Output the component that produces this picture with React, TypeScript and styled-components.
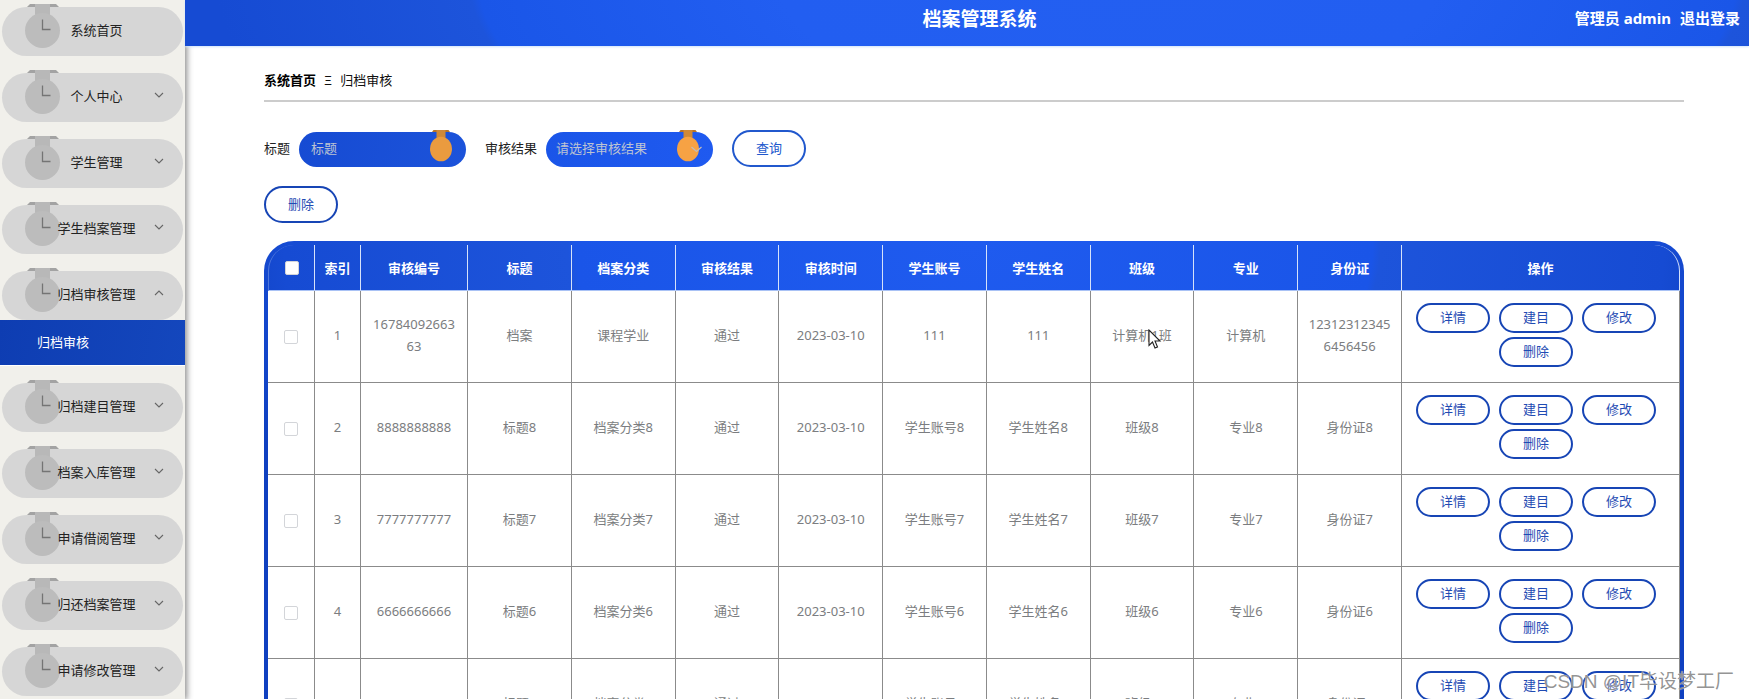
import React from "react";
import styled, { createGlobalStyle, css } from "styled-components";

const GlobalStyle = createGlobalStyle`
  * { box-sizing: border-box; }
  body {
    margin: 0;
    overflow: hidden;
    background: #fff;
    color: #222;
    font-family: "Noto Sans", "Noto Sans CJK SC", sans-serif;
    font-size: 13px;
    line-height: 22px;
  }
  button, input, select { font: inherit; }
`;

const Shell = styled.div`
  display: flex;
  height: 100vh;
  overflow: hidden;
`;

const Sidebar = styled.nav`
  flex: none;
  width: 185px;
  padding-top: 7px;
  background: #f1f0eb;
  box-shadow: 1px 0 6px 1px rgba(0, 0, 0, 0.45);
`;

const MenuList = styled.ul`
  margin: 0;
  padding: 0;
  list-style: none;
`;

const MenuEntry = styled.li`
  margin-bottom: 17px;
`;

const MenuButton = styled.button`
  position: relative;
  display: flex;
  align-items: center;
  justify-content: center;
  width: calc(100% - 4px);
  height: 49px;
  margin: 0 2px;
  padding: 0 0 3px 8px;
  border: 0;
  border-radius: 25px;
  background: #d6d6d6;
  color: #222;
  white-space: nowrap;
  cursor: pointer;
`;

const MenuLabel = styled.span`
  position: relative;
`;

const ClockSvg = styled.svg`
  position: absolute;
  left: 23px;
  top: -3px;
`;

const ChevronSvg = styled.svg<{ $open?: boolean }>`
  position: absolute;
  right: 18px;
  top: 17px;
  transform: ${(p) => (p.$open ? "rotate(180deg)" : "none")};
`;

const SubLink = styled.a`
  display: block;
  height: 46px;
  padding-left: 37px;
  border-bottom: 1px solid #fff;
  background: linear-gradient(100deg, #0e3db2, #1447bd);
  color: #fff;
  line-height: 44px;
  text-decoration: none;
`;

const Page = styled.div`
  position: relative;
  display: flex;
  flex: 1;
  flex-direction: column;
  min-width: 0;
`;

const Header = styled.header`
  position: relative;
  z-index: 1;
  display: grid;
  flex: none;
  grid-template-columns: 1fr auto 1fr;
  height: 46px;
  padding: 6px 9px 0 34px;
  background: radial-gradient(ellipse 60% 368px at 59% -20px, #235ff1 0%, #225ef1 35%, #1a56e8 67%, #1d54db 68%, #164bd3 95%);
  box-shadow: 0 1px 2px #cfe4fa;
  color: #fff;
`;

const Title = styled.h1`
  grid-column: 2;
  margin: 0;
  font-size: 19px;
  font-weight: 700;
  line-height: 26px;
`;

const Account = styled.div`
  display: flex;
  justify-content: flex-end;
  gap: 9px;
  font-size: 15px;
  font-weight: 700;
  line-height: 24px;

  a {
    color: inherit;
    text-decoration: none;
  }
`;

const Content = styled.main`
  padding: 24px 65px 0 79px;
`;

const Breadcrumb = styled.nav`
  display: flex;
  gap: 8px;
  padding-bottom: 10px;
  border-bottom: 2px solid #ccc;
  color: #111;
  line-height: 20px;

  a {
    color: #000;
    font-weight: 700;
    text-decoration: none;
  }
`;

const Filters = styled.form`
  display: flex;
  align-items: center;
  margin-top: 28px;
`;

const Field = styled.div`
  display: flex;
  align-items: center;
  gap: 9px;
  margin-right: 19px;
  padding-top: 2px;

  label { padding-bottom: 4px; }
`;

const Control = styled.div`
  position: relative;
  width: 167px;
  height: 35px;
`;

const fieldStyle = css`
  display: block;
  width: 100%;
  height: 100%;
  padding: 0 10px 4px 12px;
  border: 0;
  border-radius: 18px;
  outline: 0;
  appearance: none;
  color: #bcc3d2;
`;

const TextInput = styled.input`
  ${fieldStyle}
  background: linear-gradient(100deg, #164bd3, #1c53da);

  &::placeholder {
    color: #bcc3d2;
    opacity: 1;
  }
`;

const SelectBox = styled.select`
  ${fieldStyle}
  padding-left: 10px;
  background: linear-gradient(100deg, #1a55e8, #1f5af0);
`;

const MedalSvg = styled.svg`
  position: absolute;
  top: -2px;
  right: 9px;
  pointer-events: none;
`;

const PillButton = styled.button<{ $small?: boolean; $bright?: boolean }>`
  width: 74px;
  height: ${(p) => (p.$small ? 30 : 37)}px;
  padding: 0 0 2px;
  border: 2px solid ${(p) => (p.$bright ? "#2158cd" : "#1745b5")};
  border-radius: 19px;
  background: #fff;
  color: ${(p) => (p.$bright ? "#2158cd" : "#1f4bb3")};
  line-height: 20px;
  cursor: pointer;
`;

const Toolbar = styled.div`
  display: flex;
  margin: 19px 0 18px;
`;

const TableFrame = styled.div`
  padding: 4px 4px 0;
  border-radius: 30px 30px 0 0;
  background: radial-gradient(ellipse 54% 520px at 50% 0, #1f5bef 0%, #1a55e8 52%, #1d54db 53%, #164bd3 90%, #0f40c0 100%);
`;

const Grid = styled.table`
  width: 100%;
  border-spacing: 0;
  table-layout: fixed;
  text-align: center;
`;

const HeadCell = styled.th`
  height: 46px;
  padding: 0;
  border-right: 1px solid #d6e2fa;
  border-bottom: 1px solid #a9c2f5;
  color: #fff;
  font-weight: 700;

  &:first-child {
    border-left: 1px solid rgba(214, 226, 250, 0.3);
    border-top-left-radius: 26px;
  }
  &:last-child { border-top-right-radius: 26px; }
`;

const Cell = styled.td<{ $flush?: boolean }>`
  height: 92px;
  padding: 0 ${(p) => (p.$flush ? 0 : 10)}px 4px;
  border-right: 1px solid #8b8b8b;
  border-bottom: 1px solid #8b8b8b;
  background: #fff;
  color: #7b7d80;
  word-break: break-all;
`;

const ControlCell = styled(Cell)`
  padding: 0;
`;

const Tick = styled.input`
  display: block;
  width: 14px;
  height: 14px;
  margin: 0 auto;
  border: 1px solid #d3d5d9;
  border-radius: 2px;
  background: #fff;
  appearance: none;
`;

const Actions = styled.div`
  display: flex;
  flex-wrap: wrap;
  justify-content: center;
  padding: 0 10px;

  button { margin: 0 9px 4px 0; }
`;

const Watermark = styled.div`
  position: absolute;
  right: 15px;
  bottom: 4px;
  z-index: 2;
  color: rgba(120, 120, 120, 0.8);
  font-family: "Liberation Sans", "Noto Sans CJK SC", sans-serif;
  font-size: 19px;
  line-height: 26px;
  text-shadow: 0 0 1px #fff;
  pointer-events: none;
`;

const CursorSvg = styled.svg`
  position: absolute;
  left: 50%;
  top: 329px;
  margin-left: 181px;
  z-index: 2;
  pointer-events: none;
`;

const Clock = () => (
  <ClockSvg width="36" height="45" viewBox="0 0 36 45" aria-hidden="true">
    <path d="M5 0H31L34 3H2Z" fill="#a3a3a3" />
    <path d="M10 0H25V14H10Z" fill="#b8b8b8" />
    <circle cx="17.5" cy="26.5" r="17.5" fill="#bcbcbc" />
    <path d="M17.5 15.500V25.500H25.500" fill="none" stroke="#747474" strokeWidth="1.3" />
  </ClockSvg>
);

const Chevron = ({ open }: { open?: boolean }) => (
  <ChevronSvg $open={open} width="12" height="10" viewBox="0 0 12 10" aria-hidden="true">
    <path d="M2 3L6 7L10 3" fill="none" stroke="#666" strokeWidth="1.1" />
  </ChevronSvg>
);

const Medal = ({ arrow }: { arrow?: boolean }) => (
  <MedalSvg width="28" height="32" viewBox="0 0 28 32" aria-hidden="true">
    <path d="M4.500 0H19.500L21 2H3Z" fill="#b5732b" />
    <path d="M7.500 0H16.500V10H7.500Z" fill="#cf8938" />
    <ellipse cx="12" cy="19" rx="11" ry="12.300" fill={arrow ? "#f6a244" : "#ea9b3f"} />
    {arrow && <path d="M15.500 17L20.500 21.500L25.500 17" fill="none" stroke="#c3bdb8" strokeWidth="1.2" />}
  </MedalSvg>
);

type MenuItem = { label: string; leaf?: boolean; child?: string };

const menu: MenuItem[] = [
  { label: "系统首页", leaf: true },
  { label: "个人中心" },
  { label: "学生管理" },
  { label: "学生档案管理" },
  { label: "归档审核管理", child: "归档审核" },
  { label: "归档建目管理" },
  { label: "档案入库管理" },
  { label: "申请借阅管理" },
  { label: "归还档案管理" },
  { label: "申请修改管理" },
];

const columns = ["审核编号", "标题", "档案分类", "审核结果", "审核时间", "学生账号", "学生姓名", "班级", "专业", "身份证"];

const numbered = (n: number) => [
  String(n).repeat(10),
  `标题${n}`,
  `档案分类${n}`,
  "通过",
  "2023-03-10",
  `学生账号${n}`,
  `学生姓名${n}`,
  `班级${n}`,
  `专业${n}`,
  `身份证${n}`,
];

const rows: string[][] = [
  ["1678409266363", "档案", "课程学业", "通过", "2023-03-10", "111", "111", "计算机1班", "计算机", "123123123456456456"],
  numbered(8),
  numbered(7),
  numbered(6),
  numbered(5),
];

const actions = ["详情", "建目", "修改", "删除"];

export default function App() {
  return (
    <>
      <GlobalStyle />
      <Shell>
        <Sidebar aria-label="菜单">
          <MenuList>
            {menu.map((item) => (
              <MenuEntry key={item.label}>
                <MenuButton type="button">
                  <Clock />
                  <MenuLabel>{item.label}</MenuLabel>
                  {!item.leaf && <Chevron open={!!item.child} />}
                </MenuButton>
                {item.child && <SubLink href="#">{item.child}</SubLink>}
              </MenuEntry>
            ))}
          </MenuList>
        </Sidebar>
        <Page>
          <Header>
            <Title>档案管理系统</Title>
            <Account>
              <span>管理员 admin</span>
              <a href="#">退出登录</a>
            </Account>
          </Header>
          <Content>
            <Breadcrumb aria-label="位置">
              <a href="#">系统首页</a>
              <span>Ξ</span>
              <span>归档审核</span>
            </Breadcrumb>
            <Filters>
              <Field>
                <label htmlFor="title">标题</label>
                <Control>
                  <TextInput id="title" type="text" placeholder="标题" />
                  <Medal />
                </Control>
              </Field>
              <Field>
                <label htmlFor="result">审核结果</label>
                <Control>
                  <SelectBox id="result" defaultValue="">
                    <option value="">请选择审核结果</option>
                    <option value="pass">通过</option>
                  </SelectBox>
                  <Medal arrow />
                </Control>
              </Field>
              <PillButton type="button" $bright>查询</PillButton>
            </Filters>
            <Toolbar>
              <PillButton type="button">删除</PillButton>
            </Toolbar>
            <TableFrame>
              <Grid>
                <colgroup>
                  <col width="47" />
                  <col width="46" />
                  <col width="107" />
                  {columns.slice(1).map((name) => (
                    <col key={name} width="7.35%" />
                  ))}
                  <col />
                </colgroup>
                <thead>
                  <tr>
                    <HeadCell><Tick type="checkbox" aria-label="全选" /></HeadCell>
                    <HeadCell>索引</HeadCell>
                    {columns.map((name) => (
                      <HeadCell key={name}>{name}</HeadCell>
                    ))}
                    <HeadCell>操作</HeadCell>
                  </tr>
                </thead>
                <tbody>
                  {rows.map((row, i) => (
                    <tr key={row[0]}>
                      <ControlCell><Tick type="checkbox" aria-label={`选择 ${i + 1}`} /></ControlCell>
                      <Cell $flush>{i + 1}</Cell>
                      {row.map((value, c) => (
                        <Cell key={columns[c]}>{value}</Cell>
                      ))}
                      <ControlCell>
                        <Actions>
                          {actions.map((name) => (
                            <PillButton key={name} type="button" $small>{name}</PillButton>
                          ))}
                        </Actions>
                      </ControlCell>
                    </tr>
                  ))}
                </tbody>
              </Grid>
            </TableFrame>
          </Content>
          <CursorSvg width="14" height="21" viewBox="0 0 14 21" aria-hidden="true">
            <path d="M1 1V16.500L4.500 13L7 19L9.500 18L7 12H12Z" fill="#fff" stroke="#222" strokeWidth="1.1" />
          </CursorSvg>
          <Watermark>CSDN @IT毕设梦工厂</Watermark>
        </Page>
      </Shell>
    </>
  );
}
